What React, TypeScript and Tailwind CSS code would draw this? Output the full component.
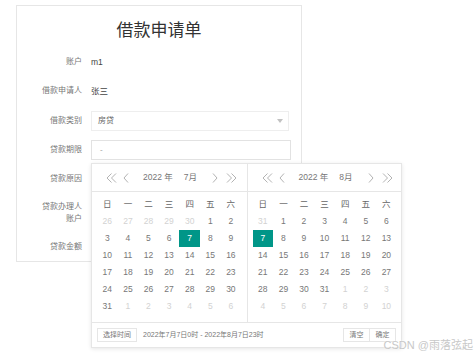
import React from "react";

const july: [number, boolean][] = [
  ...[26, 27, 28, 29, 30].map((d) => [d, false] as [number, boolean]),
  ...Array.from({ length: 31 }, (_, i) => [i + 1, true] as [number, boolean]),
  ...[1, 2, 3, 4, 5, 6].map((d) => [d, false] as [number, boolean]),
];
const aug: [number, boolean][] = [
  [31, false],
  ...Array.from({ length: 31 }, (_, i) => [i + 1, true] as [number, boolean]),
  ...[1, 2, 3, 4, 5, 6, 7, 8, 9, 10].map((d) => [d, false] as [number, boolean]),
];
const weekdays = ["日", "一", "二", "三", "四", "五", "六"];

function DoubleLeft() {
  return (
    <svg width="11" height="10" viewBox="0 0 11 10" fill="none" stroke="#aaa" strokeWidth="0.9">
      <path d="M5.5 0.5 L1 5 L5.5 9.5 M10 0.5 L5.5 5 L10 9.5" />
    </svg>
  );
}
function DoubleRight() {
  return (
    <svg width="11" height="10" viewBox="0 0 11 10" fill="none" stroke="#aaa" strokeWidth="0.9">
      <path d="M1 0.5 L5.5 5 L1 9.5 M5.5 0.5 L10 5 L5.5 9.5" />
    </svg>
  );
}
function Left() {
  return (
    <svg width="6" height="10" viewBox="0 0 6 10" fill="none" stroke="#aaa" strokeWidth="0.9">
      <path d="M5 0.5 L1 5 L5 9.5" />
    </svg>
  );
}
function Right() {
  return (
    <svg width="6" height="10" viewBox="0 0 6 10" fill="none" stroke="#aaa" strokeWidth="0.9">
      <path d="M1 0.5 L5 5 L1 9.5" />
    </svg>
  );
}

function Panel({ month, days, border }: { month: string; days: [number, boolean][]; border: boolean }) {
  return (
    <div className={border ? "w-[156px] border-r border-[#e6e6e6]" : "w-[154px]"}>
      <div className="h-[28px] border-b border-[#e6e6e6] flex items-center pl-[14px] text-[8.5px] text-[#777]">
        <DoubleLeft />
        <span className="ml-[6px]"><Left /></span>
        <span className="ml-[14px]">2022 年</span>
        <span className="ml-[11px]">{month}</span>
        <span className="ml-[15px]"><Right /></span>
        <span className="ml-[8px]"><DoubleRight /></span>
      </div>
      <div className="pl-[5px] pt-[4px]">
        <div className="grid grid-cols-[repeat(7,20.6px)] text-[8.5px]">
          {weekdays.map((w) => (
            <div key={w} className="h-[17px] flex items-center justify-center text-[#666]">{w}</div>
          ))}
          {days.map(([d, cur], i) => (
            <div key={i} className="h-[17px] flex items-center justify-center">
              {cur && d === 7 ? (
                <span className="w-[21px] h-[17px] flex items-center justify-center bg-[#009688] text-white">{d}</span>
              ) : (
                <span className={cur ? "text-[#777]" : "text-[#d2d2d2]"}>{d}</span>
              )}
            </div>
          ))}
        </div>
      </div>
    </div>
  );
}

const rows: { label: string; mt: string; value?: string; kind: "text" | "select" | "input" | "blank" }[] = [
  { label: "账户", mt: "mt-[11px]", value: "m1", kind: "text" },
  { label: "借款申请人", mt: "mt-[9px]", value: "张三", kind: "text" },
  { label: "借款类别", mt: "mt-[10px]", value: "房贷", kind: "select" },
  { label: "贷款期限", mt: "mt-[9px]", value: "-", kind: "input" },
  { label: "贷款原因", mt: "mt-[9px]", kind: "blank" },
  { label: "贷款办理人账户", mt: "mt-[14px]", kind: "blank" },
  { label: "贷款金额", mt: "mt-[14px]", kind: "blank" },
];

export default function App() {
  return (
    <div className="relative w-[474px] h-[356px] bg-white overflow-hidden font-['Liberation_Sans','Noto_Sans_CJK_SC',sans-serif]">
      <div className="ml-[16px] mt-[5px] w-[286px] h-[257px] border border-[#e6e6e6] pt-[11px]">
        <div className="h-[24px] leading-[24px] text-center text-[17px] text-[#333] font-['Noto_Sans_CJK_SC',sans-serif]">借款申请单</div>
        {rows.map((r) => (
          <div key={r.label} className={`${r.mt} flex items-center h-[20px]`}>
            <div className="ml-[21px] w-[44px] text-right text-[8px] leading-[12px] text-[#777]">{r.label}</div>
            {r.kind === "text" && <div className="ml-[9px] text-[8.5px] text-[#444]">{r.value}</div>}
            {r.kind === "select" && (
              <div className="ml-[9px] w-[198px] h-[20px] border border-[#eeeeee] flex items-center pl-[6px] pr-[5px] text-[8px] text-[#666]">
                <span>{r.value}</span>
                <span className="ml-auto w-0 h-0 border-l-[3px] border-r-[3px] border-t-[4px] border-l-transparent border-r-transparent border-t-[#c2c2c2]" />
              </div>
            )}
            {r.kind === "input" && (
              <div className="ml-[9px] w-[200px] h-[20px] border border-[#e2e2e2] flex items-center pl-[8px] text-[8px] text-[#999]">
                {r.value}
              </div>
            )}
            {r.kind === "blank" && <div className="ml-[9px] w-[200px] h-[20px] border border-[#e6e6e6]" />}
          </div>
        ))}
      </div>

      <div className="absolute left-[91px] top-[163px] w-[311px] h-[185px] bg-white border border-[#e6e6e6] shadow-[0_1px_4px_rgba(0,0,0,0.1)] flex flex-col">
        <div className="flex h-[158px]">
          <Panel month="7月" days={july} border />
          <Panel month="8月" days={aug} border={false} />
        </div>
        <div className="flex-1 border-t border-[#e6e6e6] flex items-center pl-[5px] pr-[5px]">
          <div className="h-[14px] px-[5px] border border-[#e6e6e6] flex items-center text-[7px] text-[#777]">选择时间</div>
          <div className="ml-[6px] text-[7px] text-[#777]">2022年7月7日0时 - 2022年8月7日23时</div>
          <div className="ml-auto flex">
            <div className="h-[14px] w-[27px] border border-[#e6e6e6] flex items-center justify-center text-[7px] text-[#777]">清空</div>
            <div className="h-[14px] w-[26px] border border-l-0 border-[#e6e6e6] flex items-center justify-center text-[7px] text-[#777]">确定</div>
          </div>
        </div>
      </div>

      <div className="absolute right-[1px] top-[337px] text-[11px] leading-[16px] text-[#c8c8c8] [text-shadow:0_0_2px_#fff]">CSDN @雨落弦起</div>
    </div>
  );
}
